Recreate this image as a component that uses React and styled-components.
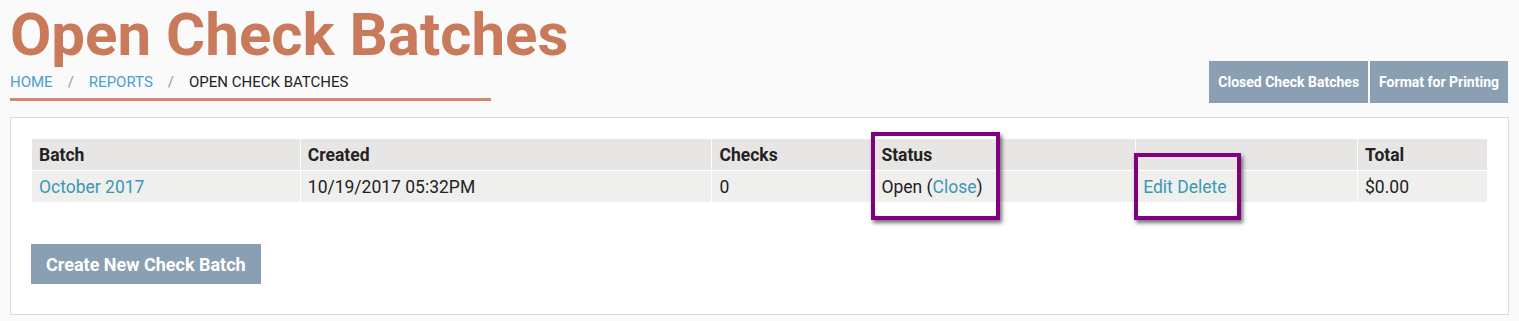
import React from 'react';
import styled, { createGlobalStyle } from 'styled-components';

const GlobalStyle = createGlobalStyle`
  body {
    margin: 0;
    background: #fafafa;
    font-family: Roboto, "Liberation Sans", Arial, sans-serif;
    color: #222;
  }
`;

const Page = styled.div`
  padding: 0 10px 10px;
`;

const Header = styled.header`
  display: flex;
  justify-content: space-between;
  align-items: flex-end;
`;

const Title = styled.h1`
  margin: 5px 0 0;
  font-size: 60px;
  line-height: 60px;
  font-weight: 700;
  color: #c87a5b;
`;

const Breadcrumb = styled.nav`
  width: 481px;
  margin-top: 7px;
  padding-bottom: 6px;
  border-bottom: 3px solid #d18a70;
  font-size: 15px;
  line-height: 20px;
  text-transform: uppercase;
  display: flex;
  gap: 15px;
`;

const Crumb = styled.a`
  color: ${p => (p.current ? '#222' : '#4b9fd1')};
  text-decoration: none;
`;

const Sep = styled.span`
  color: #999;
`;

const Actions = styled.div`
  display: flex;
  gap: 2px;
  margin-bottom: -2px;
  margin-right: 1px;
`;

const GrayButton = styled.button`
  border: none;
  background: #8aa0b2;
  color: #fff;
  font-family: Roboto, "Liberation Sans", Arial, sans-serif;
  font-weight: 700;
  font-size: ${p => (p.large ? '18px' : '14px')};
  height: ${p => (p.large ? '40px' : '42px')};
  padding: 0 ${p => (p.large ? '15px' : '9px')};
  cursor: pointer;
`;

const Panel = styled.section`
  position: relative;
  margin-top: 16px;
  background: #fff;
  border: 1px solid #d6dde2;
  padding: 21px 20px 30px;
`;

const Table = styled.table`
  width: 100%;
  border-collapse: collapse;
  font-size: 17.5px;
`;

const Th = styled.th`
  text-align: left;
  font-weight: 700;
  background: #e7e6e4;
  height: 31px;
  padding: 0 7px;
  border: 1px solid #fff;
  border-top: none;
`;

const Td = styled.td`
  background: #efefed;
  height: 31px;
  padding: 0 7px;
  border: 1px solid #fff;
  border-bottom: none;
`;

const Link = styled.a`
  color: #3a98b6;
  text-decoration: none;
`;

const Footer = styled.div`
  margin-top: 42px;
`;

const Callout = styled.div`
  position: absolute;
  border: 4px solid #800080;
  box-shadow: 2px 3px 4px rgba(0, 0, 0, 0.55);
  pointer-events: none;
`;

const cols = [269, 412, 162, 262, 222, 130];

export default function App() {
  return (
    <Page>
      <GlobalStyle />
      <Header>
        <div>
          <Title>Open Check Batches</Title>
          <Breadcrumb>
            <Crumb href="#">Home</Crumb>
            <Sep>/</Sep>
            <Crumb href="#">Reports</Crumb>
            <Sep>/</Sep>
            <Crumb current>Open Check Batches</Crumb>
          </Breadcrumb>
        </div>
        <Actions>
          <GrayButton>Closed Check Batches</GrayButton>
          <GrayButton>Format for Printing</GrayButton>
        </Actions>
      </Header>
      <Panel>
        <Table>
          <colgroup>
            {cols.map((w, i) => (
              <col key={i} style={{ width: w }} />
            ))}
          </colgroup>
          <thead>
            <tr>
              <Th>Batch</Th>
              <Th>Created</Th>
              <Th>Checks</Th>
              <Th>Status</Th>
              <Th></Th>
              <Th>Total</Th>
            </tr>
          </thead>
          <tbody>
            <tr>
              <Td><Link href="#">October 2017</Link></Td>
              <Td>10/19/2017 05:32PM</Td>
              <Td>0</Td>
              <Td>Open (<Link href="#">Close</Link>)</Td>
              <Td><Link href="#">Edit</Link> <Link href="#">Delete</Link></Td>
              <Td>$0.00</Td>
            </tr>
          </tbody>
        </Table>
        <Footer>
          <GrayButton large>Create New Check Batch</GrayButton>
        </Footer>
        <Callout style={{ left: 860, top: 14, width: 121, height: 80 }} />
        <Callout style={{ left: 1123, top: 35, width: 99, height: 59 }} />
      </Panel>
    </Page>
  );
}
